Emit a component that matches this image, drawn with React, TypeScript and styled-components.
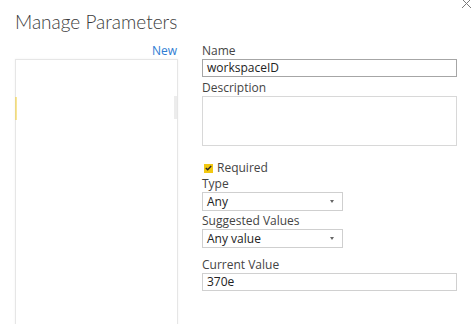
import styled, { createGlobalStyle } from "styled-components";

const GlobalStyle = createGlobalStyle`
  html, body {
    margin: 0;
    padding: 0;
    background: #ffffff;
    overflow: hidden;
  }
  body {
    font-family: "Open Sans", "Noto Sans", "Liberation Sans", sans-serif;
    color: #333333;
  }
`;

const Dialog = styled.div`
  position: relative;
  width: 474px;
  height: 324px;
  padding: 0 15px;
  box-sizing: border-box;
  overflow: hidden;
`;

const Title = styled.h1`
  margin: 0;
  padding-top: 7px;
  font-family: Lato, "Open Sans", sans-serif;
  font-size: 19px;
  line-height: 29px;
  font-weight: 300;
  color: #3b3b3b;
`;

const CloseButton = styled.button`
  position: absolute;
  top: -4px;
  right: 1px;
  width: 14px;
  height: 14px;
  padding: 0;
  border: none;
  background: transparent;
  display: flex;
  align-items: center;
  justify-content: center;
`;

const Body = styled.div`
  display: flex;
  gap: 24px;
  margin-top: 8px;
`;

const LeftColumn = styled.div`
  width: 163px;
  display: flex;
  flex-direction: column;
`;

const NewLink = styled.a`
  align-self: flex-end;
  font-size: 12px;
  line-height: 14px;
  color: #2f7dd3;
  margin-right: 1px;
  margin-bottom: 1px;
  cursor: pointer;
`;

const ListBox = styled.div`
  position: relative;
  height: 290px;
  border: 1px solid #e6e6e6;
  box-shadow: 0 0 2px rgba(0, 0, 0, 0.06);
  padding-top: 37px;
  box-sizing: border-box;
`;

const ListItem = styled.div<{ $selected?: boolean }>`
  height: 23px;
  border-left: 2px solid ${(p) => (p.$selected ? "rgba(242, 200, 17, 0.45)" : "transparent")};
  margin-left: -1px;
`;

const ScrollThumb = styled.div`
  position: absolute;
  top: 36px;
  right: 0;
  width: 3px;
  height: 23px;
  background: #ececec;
`;

const RightColumn = styled.div`
  flex: 1;
  display: flex;
  flex-direction: column;
`;

const Field = styled.div<{ $top?: number }>`
  display: flex;
  flex-direction: column;
  margin-top: ${(p) => p.$top ?? 0}px;
`;

const Label = styled.label`
  font-size: 12px;
  line-height: 14px;
  color: #444444;
  margin-bottom: 1px;
`;

const TextInput = styled.div<{ $dark?: boolean }>`
  width: 255px;
  height: 18px;
  box-sizing: border-box;
  border: 1px solid ${(p) => (p.$dark ? "#a6a6a6" : "#d0d0d0")};
  padding: 0 4px;
  font-size: 12px;
  line-height: 16px;
  color: #222222;
`;

const TextArea = styled.div`
  width: 255px;
  height: 50px;
  box-sizing: border-box;
  border: 1px solid #d8d8d8;
`;

const CheckRow = styled.div`
  display: flex;
  align-items: center;
  gap: 4px;
  margin-top: 15px;
  margin-left: 2px;
  font-size: 12px;
  line-height: 14px;
  color: #444444;
`;

const CheckBox = styled.span`
  width: 9px;
  height: 9px;
  background: #f2c811;
  display: flex;
  align-items: center;
  justify-content: center;
`;

const Select = styled.div`
  width: 141px;
  height: 19px;
  box-sizing: border-box;
  border: 1px solid #cfcfcf;
  padding: 0 8px 0 4px;
  display: flex;
  align-items: center;
  justify-content: space-between;
  font-size: 12px;
  color: #222222;
`;

const Arrow = styled.span`
  width: 0;
  height: 0;
  border-left: 2.5px solid transparent;
  border-right: 2.5px solid transparent;
  border-top: 3px solid #666666;
`;

export default function App() {
  return (
    <>
      <GlobalStyle />
      <Dialog>
        <Title>Manage Parameters</Title>
        <CloseButton aria-label="Close">
          <svg width="11" height="11" viewBox="0 0 11 11">
            <path d="M1 1 L10 10 M10 1 L1 10" stroke="#7a7a7a" strokeWidth="1" fill="none" />
          </svg>
        </CloseButton>
        <Body>
          <LeftColumn>
            <NewLink>New</NewLink>
            <ListBox>
              <ListItem $selected />
              <ScrollThumb />
            </ListBox>
          </LeftColumn>
          <RightColumn>
            <Field>
              <Label>Name</Label>
              <TextInput $dark>workspaceID</TextInput>
            </Field>
            <Field $top={4}>
              <Label>Description</Label>
              <TextArea />
            </Field>
            <CheckRow>
              <CheckBox>
                <svg width="7" height="6" viewBox="0 0 7 6">
                  <path d="M0.8 3 L2.7 4.8 L6.2 1" stroke="#2b2b2b" strokeWidth="1.4" fill="none" />
                </svg>
              </CheckBox>
              Required
            </CheckRow>
            <Field $top={2}>
              <Label>Type</Label>
              <Select>
                Any
                <Arrow />
              </Select>
            </Field>
            <Field $top={3}>
              <Label>Suggested Values</Label>
              <Select>
                Any value
                <Arrow />
              </Select>
            </Field>
            <Field $top={10}>
              <Label>Current Value</Label>
              <TextInput>370e</TextInput>
            </Field>
          </RightColumn>
        </Body>
      </Dialog>
    </>
  );
}
